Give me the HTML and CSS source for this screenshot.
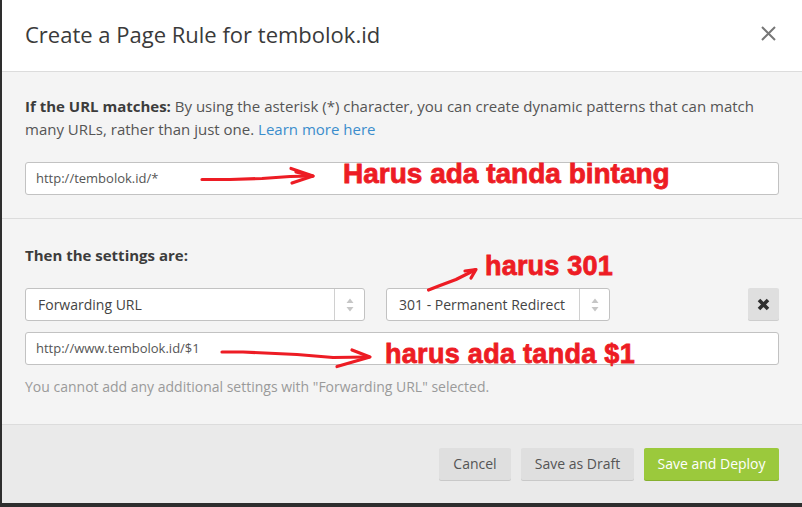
FILE: index.html
```html
<!DOCTYPE html>
<html lang="en">
<head>
<meta charset="utf-8">
<title>Create a Page Rule</title>
<link rel="stylesheet" href="styles.css">
</head>
<body>
<div class="page">
  <div class="modal">
    <header class="modal-header">
      <h1 class="title">Create a Page Rule for tembolok.id</h1>
      <button class="close" aria-label="Close">
        <svg width="15" height="15" viewBox="0 0 15 15"><path d="M1 1L14 14M14 1L1 14" stroke="#777" stroke-width="2" fill="none"/></svg>
      </button>
    </header>

    <section class="section match">
      <p class="intro"><strong>If the URL matches:</strong> By using the asterisk (*) character, you can create dynamic patterns that can match many URLs, rather than just one. <a href="#" class="link">Learn more here</a></p>
      <div class="field">http://tembolok.id/*</div>
    </section>

    <section class="section settings">
      <p class="label">Then the settings are:</p>
      <div class="row">
        <div class="select select-setting">
          <span class="select-text">Forwarding URL</span>
          <span class="caret"><svg width="8" height="14" viewBox="0 0 8 14"><path d="M0.5 5L4 0.5L7.5 5Z M0.5 9L7.5 9L4 13.5Z" fill="#c6c6c6"/></svg></span>
        </div>
        <div class="select select-status">
          <span class="select-text">301 - Permanent Redirect</span>
          <span class="caret"><svg width="8" height="14" viewBox="0 0 8 14"><path d="M0.5 5L4 0.5L7.5 5Z M0.5 9L7.5 9L4 13.5Z" fill="#c6c6c6"/></svg></span>
        </div>
        <button class="remove" aria-label="Remove">
          <svg width="13" height="13" viewBox="0 0 13 13"><path d="M2 2L11 11M11 2L2 11" stroke="#2f2f2f" stroke-width="3.6" fill="none"/></svg>
        </button>
      </div>
      <div class="field field-dest">http://www.tembolok.id/$1</div>
      <p class="help">You cannot add any additional settings with "Forwarding URL" selected.</p>
    </section>

    <footer class="modal-footer">
      <button class="btn btn-cancel">Cancel</button>
      <button class="btn btn-draft">Save as Draft</button>
      <button class="btn btn-primary">Save and Deploy</button>
    </footer>
  </div>

  <div class="annotations">
    <svg class="arrows" width="802" height="507" viewBox="0 0 802 507">
      <g stroke="#ed1c24" stroke-width="3.2" fill="none" stroke-linecap="round" stroke-linejoin="round">
        <path d="M202 179.5L230 179.5L262 178.5L290 176.5L313 176"/>
        <path d="M291 168.5L313 176L292 183"/>
        <path d="M296 172L312 176"/>
        <path d="M428.5 290L440 285.5L456 279.5L475 270"/>
        <path d="M465 271L476 269.5L471 278"/>
        <path d="M222 352L243 352L297 354.5L333 357.5L369 357"/>
        <path d="M352 350L370 357L337 366.5"/>
      </g>
    </svg>
    <span class="note note-1">Harus ada tanda bintang</span>
    <span class="note note-2">harus 301</span>
    <span class="note note-3">harus ada tanda $1</span>
  </div>
</div>
</body>
</html>
```

FILE: styles.css
```css
* {
  box-sizing: border-box;
}

html, body {
  margin: 0;
  padding: 0;
}

body {
  background: #2e2e2e;
  font-family: "Open Sans", "Noto Sans", sans-serif;
  width: 802px;
  height: 507px;
  overflow: hidden;
}

.page {
  position: relative;
  width: 802px;
  height: 507px;
}

.modal {
  margin-left: 2px;
  width: 800px;
  height: 503px;
  background: #f4f4f4;
  display: flex;
  flex-direction: column;
}

.modal-header {
  height: 72px;
  background: #fff;
  border-bottom: 1px solid #dcdcdc;
  display: flex;
  align-items: center;
  justify-content: space-between;
  padding: 0 26px 4px 23px;
}

.title {
  margin: 0;
  font-size: 22px;
  font-weight: 400;
  color: #3a3a3a;
  line-height: 30px;
}

.close {
  border: 0;
  background: none;
  padding: 0;
  width: 15px;
  height: 15px;
  display: flex;
}

.section {
  padding: 23px 23px 23px;
  border-bottom: 1px solid #dcdcdc;
  background: #f4f4f4;
}

.intro {
  margin: 0;
  font-size: 15px;
  line-height: 22.5px;
  color: #555;
}

.intro strong {
  color: #3c3c3c;
  font-weight: 700;
}

.link {
  color: #3b8dcc;
  text-decoration: none;
}

.field {
  margin-top: 22px;
  height: 33px;
  border: 1px solid #c2c2c2;
  border-radius: 3px;
  background: #fff;
  padding: 0 10px;
  font-size: 13px;
  line-height: 31px;
  color: #555;
}

.settings {
  padding-top: 24.5px;
  padding-bottom: 27px;
}

.label {
  margin: 0;
  font-size: 15px;
  line-height: 22.5px;
  font-weight: 700;
  color: #3c3c3c;
}

.row {
  margin-top: 22px;
  display: flex;
  align-items: flex-start;
}

.select {
  height: 33px;
  border: 1px solid #c2c2c2;
  border-radius: 3px;
  background: #fff;
  display: flex;
  align-items: stretch;
}

.select-setting {
  width: 340px;
}

.select-status {
  width: 224px;
  margin-left: 21px;
}

.select-text {
  flex: 1;
  padding-left: 12px;
  font-size: 14px;
  line-height: 31px;
  color: #444;
  white-space: nowrap;
}

.caret {
  width: 30px;
  border-left: 1px solid #d0d0d0;
  display: flex;
  align-items: center;
  justify-content: center;
}

.remove {
  margin-left: auto;
  width: 31px;
  height: 32px;
  border: 0;
  border-radius: 2px;
  background: #dfdfdf;
  box-shadow: 0 1px 0 #cdcdcd;
  display: flex;
  align-items: center;
  justify-content: center;
  padding: 0;
}

.field-dest {
  margin-top: 11px;
}

.help {
  margin: 10.5px 0 0;
  font-size: 14px;
  line-height: 21px;
  color: #9a9a9a;
}

.modal-footer {
  flex: 1;
  background: #eaeaea;
  display: flex;
  justify-content: flex-end;
  align-items: flex-start;
  gap: 10px;
  padding: 23px 23px 0;
}

.btn {
  height: 32px;
  border: 0;
  border-radius: 2px;
  background: #dfdfdf;
  box-shadow: 0 1px 0 #c9c9c9;
  padding: 0;
  text-align: center;
  font-family: "Open Sans", "Noto Sans", sans-serif;
  font-size: 14px;
  color: #555;
  line-height: 32px;
}

.btn-cancel {
  width: 72px;
}

.btn-draft {
  width: 113px;
}

.btn-primary {
  width: 135px;
  background: #9bc93c;
  box-shadow: 0 1px 0 #86b02f;
  color: #fff;
}

.annotations {
  position: absolute;
  inset: 0;
  pointer-events: none;
}

.arrows {
  position: absolute;
  left: 0;
  top: 0;
}

.note {
  position: absolute;
  font-family: "Liberation Sans", Arial, sans-serif;
  font-weight: 700;
  color: #ed1c24;
  line-height: 1;
  white-space: nowrap;
  -webkit-text-stroke: 0.8px #ed1c24;
}

.note-1 {
  left: 343px;
  top: 159.5px;
  font-size: 28px;
}

.note-2 {
  left: 485px;
  top: 253px;
  font-size: 27px;
  letter-spacing: 0.2px;
}

.note-3 {
  left: 385px;
  top: 340.5px;
  font-size: 27px;
  letter-spacing: 0.3px;
}
```
